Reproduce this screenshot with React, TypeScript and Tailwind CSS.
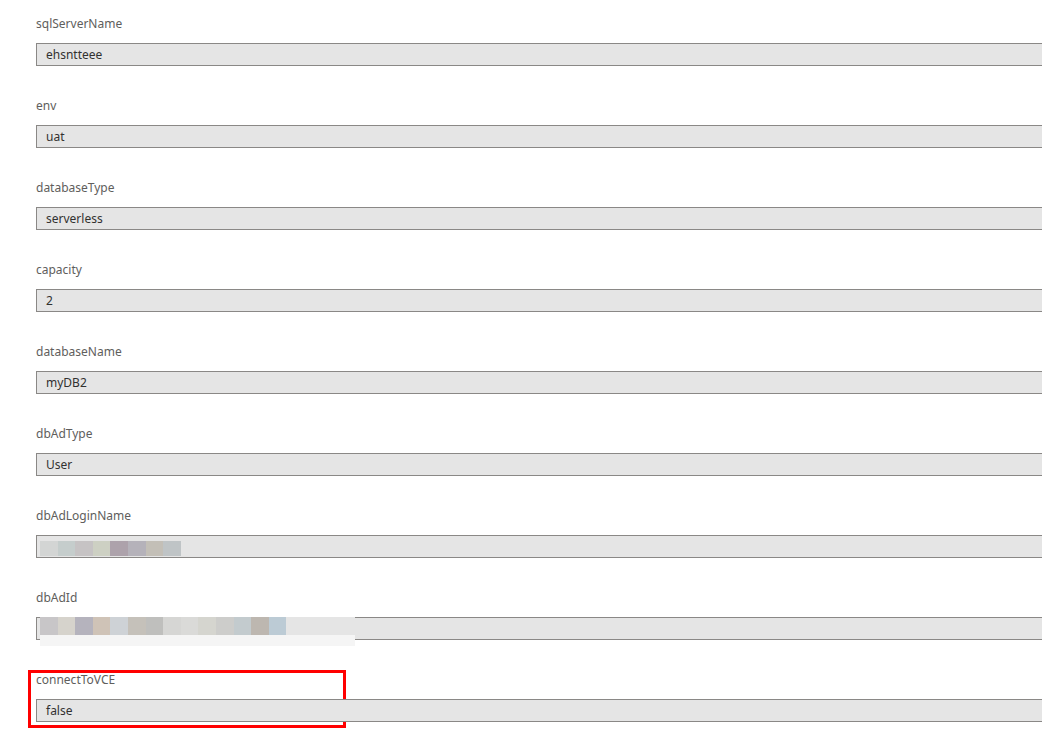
import React from "react";

type Field = {
  label: string;
  value?: string;
  redact?: "login" | "id";
};

const fields: Field[] = [
  { label: "sqlServerName", value: "ehsntteee" },
  { label: "env", value: "uat" },
  { label: "databaseType", value: "serverless" },
  { label: "capacity", value: "2" },
  { label: "databaseName", value: "myDB2" },
  { label: "dbAdType", value: "User" },
  { label: "dbAdLoginName", redact: "login" },
  { label: "dbAdId", redact: "id" },
  { label: "connectToVCE", value: "false" },
];

const loginBlocks = [
  "#d3d5d4",
  "#c5cdcc",
  "#c6c3c4",
  "#cdd0c3",
  "#ada2ab",
  "#b5b2ba",
  "#c3bfb7",
  "#bfc4c6",
];

const idBlocks = [
  "#c8c6c8",
  "#d6d3cc",
  "#b5b3bd",
  "#cfc3b7",
  "#ced2d6",
  "#c5c1ba",
  "#bfbfbd",
  "#d6d6d4",
  "#dadad8",
  "#d5d5cf",
  "#cdcdcb",
  "#c3cbce",
  "#bdb7b0",
  "#bccbd5",
];

function Redacted({ kind }: { kind: "login" | "id" }) {
  if (kind === "login") {
    return (
      <div className="absolute left-[3px] top-[5px] flex h-[15px]">
        {loginBlocks.map((c, i) => (
          <div key={i} className="h-full w-[17.6px]" style={{ backgroundColor: c }} />
        ))}
      </div>
    );
  }
  return (
    <div className="absolute left-[3px] top-[-1px] flex w-[315px] flex-col">
      <div className="flex h-[18px] bg-[#e5e5e5]">
        {idBlocks.map((c, i) => (
          <div key={i} className="h-full w-[17.6px]" style={{ backgroundColor: c }} />
        ))}
      </div>
      <div className="h-[11px] bg-[#f5f5f5]" />
    </div>
  );
}

function FormField({ field, highlight }: { field: Field; highlight?: boolean }) {
  return (
    <div className="relative mb-[30px]">
      {highlight && (
        <div className="pointer-events-none absolute left-[-8px] top-0 h-[58px] w-[318px] border-[3px] border-[#ff0000]" />
      )}
      <div className="h-[20px] text-[12px] leading-[20px] text-[#605e5c]">{field.label}</div>
      <div className="relative mt-[9px] flex h-[23px] items-center border border-[#8a8886] bg-[#e5e5e5] pl-[9px] text-[12px] text-[#323130]">
        {field.value}
        {field.redact && <Redacted kind={field.redact} />}
      </div>
    </div>
  );
}

export default function App() {
  return (
    <div
      className="min-h-[752px] w-[1042px] overflow-hidden bg-white pl-[36px] pt-[14px]"
      style={{ fontFamily: '"Noto Sans", "Open Sans", sans-serif' }}
    >
      <div className="mr-[-4px]">
        {fields.map((f, i) => (
          <FormField key={f.label} field={f} highlight={i === fields.length - 1} />
        ))}
      </div>
    </div>
  );
}
